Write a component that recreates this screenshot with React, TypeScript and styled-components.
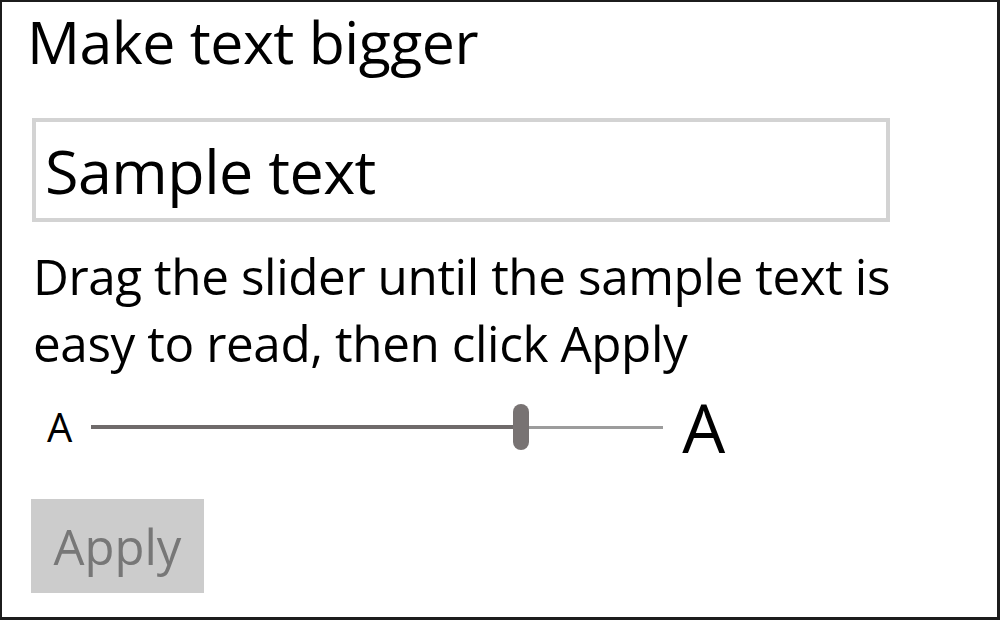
import React from 'react'
import styled, { createGlobalStyle } from 'styled-components'

const GlobalStyle = createGlobalStyle`
  html, body {
    margin: 0;
    padding: 0;
    background: #ffffff;
  }
  body {
    font-family: 'Open Sans', 'Noto Sans', sans-serif;
    color: #000000;
  }
`

const Frame = styled.div`
  box-sizing: border-box;
  width: 1000px;
  height: 620px;
  border-style: solid;
  border-color: #1c1c1c;
  border-width: 2px 3px 3px 2px;
  padding: 0 0 0 25px;
  display: flex;
  flex-direction: column;
  align-items: flex-start;
  overflow: hidden;
`

const Title = styled.h1`
  margin: 7px 0 0 0;
  font-size: 59px;
  font-weight: 400;
  line-height: 64px;
  letter-spacing: -0.5px;
`

const SampleBox = styled.div`
  box-sizing: border-box;
  margin: 45px 0 0 5px;
  width: 858px;
  height: 104px;
  border: 4px solid #d3d3d3;
  padding: 0 0 0 9px;
  display: flex;
  align-items: center;
  font-size: 61px;
  letter-spacing: -0.5px;
`

const Hint = styled.p`
  margin: 20px 0 0 6px;
  width: 940px;
  font-size: 49.4px;
  line-height: 67px;
  letter-spacing: -0.4px;
`

const SliderRow = styled.div`
  margin: 23px 0 0 20px;
  display: flex;
  align-items: center;
  height: 56px;
`

const EndLabel = styled.span<{ $size: number }>`
  font-size: ${(p) => p.$size}px;
  line-height: 1;
`

const Track = styled.div`
  margin: 0 19px 0 19px;
  width: 572px;
  height: 48px;
  display: flex;
  align-items: center;
`

const Fill = styled.div`
  height: 4px;
  background: #6f6b6b;
`

const Thumb = styled.div`
  width: 16px;
  height: 46px;
  border-radius: 8px;
  background: #787373;
`

const Rest = styled.div`
  flex: 1;
  height: 3px;
  background: #9c9c9c;
`

const ApplyButton = styled.button`
  margin: 44px 0 0 4px;
  width: 173px;
  height: 94px;
  border: none;
  background: #cccccc;
  color: #777777;
  font-family: 'Open Sans', 'Noto Sans', sans-serif;
  font-size: 49px;
  padding: 0;
  cursor: default;
`

const TRACK_WIDTH = 572
const THUMB_WIDTH = 16

export default function App() {
  const value = 0.752
  const fillWidth = Math.round(value * TRACK_WIDTH - THUMB_WIDTH / 2)

  return (
    <>
      <GlobalStyle />
      <Frame>
        <Title>Make text bigger</Title>
        <SampleBox>Sample text</SampleBox>
        <Hint>Drag the slider until the sample text is easy to read, then click Apply</Hint>
        <SliderRow>
          <EndLabel $size={40}>A</EndLabel>
          <Track>
            <Fill style={{ width: fillWidth }} />
            <Thumb />
            <Rest />
          </Track>
          <EndLabel $size={68}>A</EndLabel>
        </SliderRow>
        <ApplyButton disabled>Apply</ApplyButton>
      </Frame>
    </>
  )
}
